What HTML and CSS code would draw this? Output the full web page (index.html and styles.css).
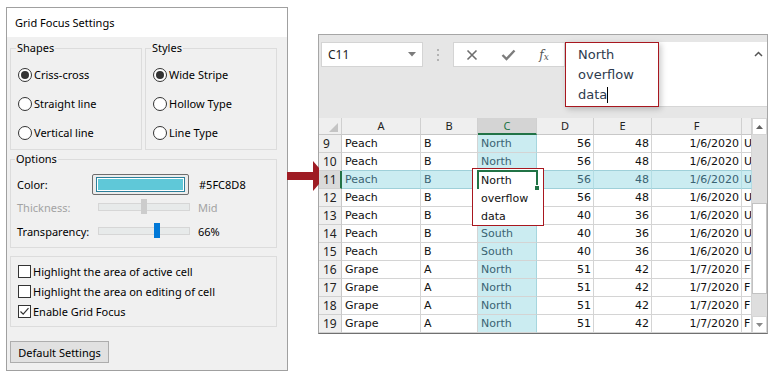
FILE: index.html
```html
<!DOCTYPE html>
<html>
<head>
<meta charset="utf-8">
<link rel="stylesheet" href="styles.css">
</head>
<body>
<div class="page">
  <div class="dialog">
    <div class="dlg-title">Grid Focus Settings</div>
    <div class="dlg-body">
      <div class="row2">
        <fieldset class="grp grp-half">
          <legend>Shapes</legend>
          <div class="opt"><span class="radio on"></span>Criss-cross</div>
          <div class="opt"><span class="radio"></span>Straight line</div>
          <div class="opt"><span class="radio"></span>Vertical line</div>
        </fieldset>
        <fieldset class="grp grp-half">
          <legend>Styles</legend>
          <div class="opt"><span class="radio on"></span>Wide Stripe</div>
          <div class="opt"><span class="radio"></span>Hollow Type</div>
          <div class="opt"><span class="radio"></span>Line Type</div>
        </fieldset>
      </div>
      <fieldset class="grp grp-opts">
        <legend>Options</legend>
        <div class="orow orow-c">
          <span class="olabel">Color:</span>
          <span class="colorbtn"><span class="swatch"></span></span>
          <span class="oval hex">#5FC8D8</span>
        </div>
        <div class="orow orow-s disabled">
          <span class="olabel">Thickness:</span>
          <span class="track"><span class="thumb gray" style="left:42px"></span></span>
          <span class="oval">Mid</span>
        </div>
        <div class="orow orow-s">
          <span class="olabel">Transparency:</span>
          <span class="track"><span class="thumb blue" style="left:55px"></span></span>
          <span class="oval">66%</span>
        </div>
      </fieldset>
      <div class="grp-checks">
        <div class="chk-row"><span class="chk"></span>Highlight the area of active cell</div>
        <div class="chk-row"><span class="chk"></span>Highlight the area on editing of cell</div>
        <div class="chk-row"><span class="chk on"><svg width="11" height="11" viewBox="0 0 11 11"><path d="M1.5 5.5 L4.2 8.2 L9.5 2.2" fill="none" stroke="#333" stroke-width="1.2"/></svg></span>Enable Grid Focus</div>
      </div>
      <div class="btn">Default Settings</div>
    </div>
  </div>

  <svg class="arrow" width="42" height="32" viewBox="0 0 42 32">
    <rect x="1" y="12" width="28" height="8" fill="#9e1c24"/>
    <polygon points="27,1 40,16 27,31" fill="#9e1c24"/>
  </svg>

  <div class="excel">
    <div class="fbar">
      <div class="namebox"><span>C11</span>
        <svg width="8" height="5" viewBox="0 0 8 5"><polygon points="0,0 8,0 4,4.5" fill="#7b7b7b"/></svg>
      </div>
      <div class="sep"><span class="dot"></span><span class="dot"></span><span class="dot"></span></div>
      <div class="fbtns">
        <span class="fslot"><svg width="12" height="12" viewBox="0 0 12 12"><path d="M1.5 1.5 L10.5 10.5 M10.5 1.5 L1.5 10.5" stroke="#6e6e6e" stroke-width="1.6"/></svg></span>
        <span class="fslot"><svg width="15" height="12" viewBox="0 0 15 12"><path d="M1.5 6 L5.5 10 L13.5 1.5" fill="none" stroke="#7c7c7c" stroke-width="2.4"/></svg></span>
        <span class="fslot fx">f<span class="fxsub">x</span></span>
      </div>
      <div class="formula">
        <div class="fedit">North<br>overflow<br>data<span class="cursor"></span></div>
        <svg class="fcaret" width="9" height="6" viewBox="0 0 9 6"><polyline points="1,5 4.5,1.5 8,5" fill="none" stroke="#555" stroke-width="1.5"/></svg>
      </div>
    </div>
    <div class="gwrap">
      <div class="grid">
        <div class="c h corner"><svg width="9" height="9" viewBox="0 0 9 9"><polygon points="9,0 9,9 0,9" fill="#c4c4c4"/></svg></div>
        <div class="c h">A</div><div class="c h">B</div><div class="c h hsel-c">C</div><div class="c h">D</div><div class="c h">E</div><div class="c h">F</div><div class="c h"></div>

        <div class="c rh">9</div><div class="c">Peach</div><div class="c">B</div><div class="c hc">North</div><div class="c n">56</div><div class="c n">48</div><div class="c n">1/6/2020</div><div class="c g">U</div>
        <div class="c rh">10</div><div class="c above">Peach</div><div class="c above">B</div><div class="c hc above">North</div><div class="c n above">56</div><div class="c n above">48</div><div class="c n above">1/6/2020</div><div class="c g above">U</div>
        <div class="c rh hsel-r">11</div><div class="c hr">Peach</div><div class="c hr">B</div><div class="c hc hr">North</div><div class="c n hr">56</div><div class="c n hr">48</div><div class="c n hr">1/6/2020</div><div class="c g hr">U</div>
        <div class="c rh">12</div><div class="c">Peach</div><div class="c">B</div><div class="c hc"></div><div class="c n">56</div><div class="c n">48</div><div class="c n">1/6/2020</div><div class="c g">U</div>
        <div class="c rh">13</div><div class="c">Peach</div><div class="c">B</div><div class="c hc"></div><div class="c n">40</div><div class="c n">36</div><div class="c n">1/6/2020</div><div class="c g">U</div>
        <div class="c rh">14</div><div class="c">Peach</div><div class="c">B</div><div class="c hc">South</div><div class="c n">40</div><div class="c n">36</div><div class="c n">1/6/2020</div><div class="c g">U</div>
        <div class="c rh">15</div><div class="c">Peach</div><div class="c">B</div><div class="c hc">South</div><div class="c n">40</div><div class="c n">36</div><div class="c n">1/6/2020</div><div class="c g">U</div>
        <div class="c rh">16</div><div class="c">Grape</div><div class="c">A</div><div class="c hc">North</div><div class="c n">51</div><div class="c n">42</div><div class="c n">1/7/2020</div><div class="c g">F</div>
        <div class="c rh">17</div><div class="c">Grape</div><div class="c">A</div><div class="c hc">North</div><div class="c n">51</div><div class="c n">42</div><div class="c n">1/7/2020</div><div class="c g">F</div>
        <div class="c rh">18</div><div class="c">Grape</div><div class="c">A</div><div class="c hc">North</div><div class="c n">51</div><div class="c n">42</div><div class="c n">1/7/2020</div><div class="c g">F</div>
        <div class="c rh">19</div><div class="c">Grape</div><div class="c">A</div><div class="c hc">North</div><div class="c n">51</div><div class="c n">42</div><div class="c n">1/7/2020</div><div class="c g">F</div>
      </div>
      <div class="vscroll">
        <div class="sbtn"><svg width="7" height="4" viewBox="0 0 7 4"><polygon points="0,4 7,4 3.5,0" fill="#606060"/></svg></div>
        <div class="strack t1"></div>
        <div class="sthumb"></div>
        <div class="strack t2"></div>
        <div class="sbtn"><svg width="7" height="4" viewBox="0 0 7 4"><polygon points="0,0 7,0 3.5,4" fill="#8a8a8a"/></svg></div>
      </div>
      <div class="active-edit">
        <div class="active-cell"></div>
        <div class="fill-handle"></div>
        North<br>overflow<br>data
      </div>
    </div>
  </div>
</div>
</body>
</html>
```

FILE: styles.css
```css
* { box-sizing: border-box; }
html, body { margin: 0; padding: 0; background: #fff; }
body {
  width: 777px;
  height: 376px;
  overflow: hidden;
  font-family: "Noto Sans", sans-serif;
  font-size: 11px;
  color: #000;
}
.page { position: relative; display: flex; align-items: flex-start; }

/* ---------- dialog ---------- */
.dialog {
  margin: 7px 0 0 6px;
  width: 282px;
  height: 364px;
  border: 1px solid #a0a0a0;
  background: #f0f0f0;
  display: flex;
  flex-direction: column;
}
.dlg-title {
  height: 29px;
  line-height: 29px;
  padding-left: 8px;
  background: #fff;
  font-size: 11px;
}
.dlg-body {
  padding: 4px 0 0 3px;
  display: flex;
  flex-direction: column;
  align-items: flex-start;
}
.row2 { display: flex; gap: 3px; }
.grp {
  margin: 0;
  border: 1px solid #dcdcdc;
  min-width: 0;
}
.grp legend {
  padding: 0 1px;
  margin-left: -2px;
  line-height: 14px;
  font-size: 11px;
}
.grp-half { width: 132px; padding: 5px 0 2px 7px; }
.opt { display: flex; align-items: center; gap: 2px; height: 29px; }
.radio {
  width: 14px; height: 14px;
  border: 1px solid #333;
  border-radius: 50%;
  background: #fff;
  display: flex; align-items: center; justify-content: center;
  flex: none;
}
.radio.on::after {
  content: "";
  width: 8px; height: 8px;
  border-radius: 50%;
  background: #333;
}

.grp-opts { width: 267px; margin-top: 2px; padding: 8px 0 4px 6px; }
.orow { display: flex; align-items: center; }
.orow-c { height: 21px; }
.orow-s { height: 24px; }
.olabel { width: 75px; flex: none; }
.colorbtn {
  width: 97px; height: 21px;
  border: 1px solid #6d6d6d;
  border-radius: 2px;
  background: #ececec;
  padding: 2px 3px;
  display: flex;
}
.swatch {
  flex: 1;
  background: #5FC8D8;
  border: 1px solid #2c7f9a;
  box-shadow: inset 0 0 0 1px #fff;
}
.oval { margin-left: 8px; }
.oval.hex { margin-left: 10px; }
.disabled { color: #a3a3a3; }
.track {
  position: relative;
  margin-left: 6px;
  width: 92px; height: 8px;
  background: #e7eaea;
  border: 1px solid #d6d6d6;
  flex: none;
}
.thumb { position: absolute; top: -5px; width: 6px; height: 15px; }
.thumb.gray { background: #cccccc; }
.thumb.blue { background: #0078d7; }

.grp-checks {
  width: 267px;
  margin-top: 8px;
  border: 1px solid #dcdcdc;
  padding: 4px 0 5px 7px;
}
.chk-row { display: flex; align-items: center; gap: 2px; height: 20px; }
.chk {
  width: 13px; height: 13px;
  border: 1px solid #333;
  background: #fff;
  flex: none;
  display: flex; align-items: center; justify-content: center;
}
.btn {
  margin-top: 14px;
  width: 99px; height: 22px;
  background: #e1e1e1;
  border: 1px solid #adadad;
  display: flex; align-items: center; justify-content: center;
}

/* ---------- arrow ---------- */
.arrow { position: absolute; left: 286px; top: 160px; }

/* ---------- excel ---------- */
.excel {
  margin: 34px 0 0 30px;
  width: 450px;
  border: 1px solid #a6a6a6;
  border-bottom-color: #707070;
  background: #e6e6e6;
}
.fbar {
  height: 83px;
  display: flex;
  align-items: flex-start;
  padding: 7px 0 0 2px;
}
.namebox {
  width: 102px; height: 25px;
  background: #fff;
  border: 1px solid #d4d4d4;
  display: flex; align-items: center; justify-content: space-between;
  padding: 0 6px 0 6px;
  font-size: 12px;
  color: #222;
}
.sep {
  width: 30px; height: 25px;
  display: flex; flex-direction: column; align-items: center; justify-content: center;
  gap: 3px;
}
.dot { width: 2px; height: 2px; background: #b3b3b3; }
.fbtns {
  width: 112px; height: 25px;
  background: #fff;
  border: 1px solid #d4d4d4;
  display: flex;
}
.fslot {
  width: 36px; height: 23px;
  display: flex; align-items: center; justify-content: center;
}
.fx {
  font-family: "DejaVu Serif", serif;
  font-style: italic;
  font-size: 12px;
  color: #555;
}
.fxsub { font-size: 9px; position: relative; top: 2px; }
.formula {
  flex: 1;
  height: 65px;
  background: #fff;
  border-bottom: 1px solid #d6d6d6;
  display: flex;
  align-items: flex-start;
}
.fedit {
  width: 94px; height: 65px;
  border: 1px solid #a8171f;
  box-shadow: 2px 2px 6px rgba(0,0,0,.22);
  padding: 2px 0 0 12px;
  font-family: "DejaVu Sans", sans-serif;
  font-size: 13px;
  line-height: 20px;
  color: #2e3b4e;
  background: #fff;
}
.cursor {
  display: inline-block;
  width: 1px; height: 16px;
  background: #000;
  vertical-align: -4px;
}
.fcaret { margin: 9px 4px 0 auto; }

.gwrap { position: relative; display: flex; }
.grid {
  display: grid;
  grid-template-columns: 23px 79px 57px 59px 57px 58px 90px 10px;
  grid-template-rows: 17px repeat(11, 18px);
}
.c {
  border-right: 1px solid #d4d4d4;
  border-bottom: 1px solid #d4d4d4;
  font-family: "DejaVu Sans", sans-serif;
  font-size: 11px;
  line-height: 17px;
  padding: 0 3px;
  white-space: nowrap;
  overflow: hidden;
  background: #fff;
  color: #111;
}
.c.n { text-align: right; padding-right: 2px; }
.c.g { padding: 0 0 0 2px; }
.c.h {
  background: #efefef;
  font-family: "Noto Sans", sans-serif;
  font-size: 11px;
  line-height: 16px;
  text-align: center;
  color: #222;
  border-right-color: #d0d0d0;
  border-bottom-color: #c8c8c8;
}
.c.corner {
  display: flex; justify-content: flex-end; align-items: flex-end;
  padding: 0 3px 2px 0;
}
.c.rh {
  background: #efefef;
  font-family: "Noto Sans", sans-serif;
  font-size: 12px;
  padding-left: 4px;
  color: #222;
  border-right-color: #c8c8c8;
  border-bottom-color: #d0d0d0;
}
.c.hsel-c {
  background: #d4d4d4;
  color: #217346;
  border-bottom: 2px solid #217346;
  line-height: 15px;
}
.c.hsel-r {
  background: #dadada;
  border-right: 2px solid #217346;
}
.c.hc {
  background: #cbecf1;
  color: #3a6373;
  border-right-color: #a6d6de;
}
.c.above { border-bottom-color: #9fd0d9; }
.c.hr {
  background: #cbecf1;
  color: #3a6373;
  border-bottom-color: #9fd0d9;
  border-right-color: #b3dde4;
}

.vscroll {
  width: 15px;
  display: flex;
  flex-direction: column;
  background: #dedede;
}
.sbtn {
  height: 17px;
  background: #fff;
  border: 1px solid #d6d6d6;
  display: flex; align-items: center; justify-content: center;
}
.strack.t1 { height: 68px; }
.sthumb { height: 91px; background: #fff; border: 1px solid #c2c2c2; }
.strack.t2 { height: 22px; }

.active-edit {
  position: absolute;
  left: 153px;
  top: 50px;
  width: 72px;
  height: 58px;
  border: 1px solid #a8171f;
  background: #fff;
  padding: 3px 0 0 8px;
  font-family: "DejaVu Sans", sans-serif;
  font-size: 11px;
  line-height: 18px;
  color: #111;
}
.active-cell {
  position: absolute;
  left: 4px; top: 1px;
  width: 61px; height: 19px;
  border: 2px solid #217346;
  border-bottom: 0;
}
.fill-handle {
  position: absolute;
  left: 61px; top: 16px;
  width: 6px; height: 6px;
  background: #217346;
  border: 1px solid #fff;
}
```
